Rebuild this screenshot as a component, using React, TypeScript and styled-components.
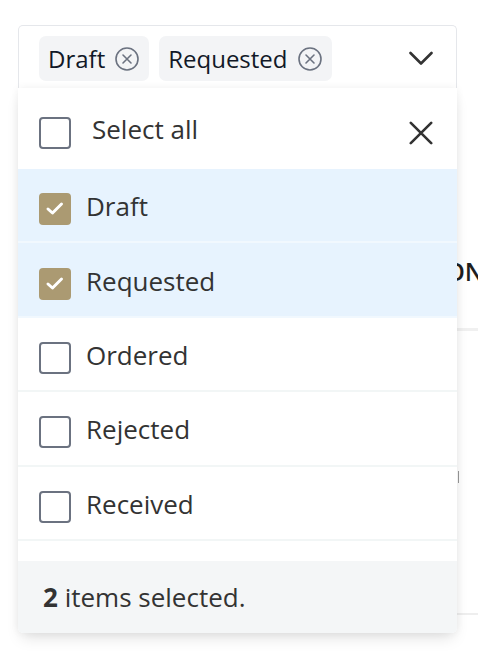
import React from "react";
import styled, { createGlobalStyle } from "styled-components";

const GlobalStyle = createGlobalStyle`
  html, body { margin: 0; padding: 0; background: #ffffff; }
  body { font-family: "Open Sans", "Noto Sans", sans-serif; }
  * { box-sizing: border-box; }
`;

const Page = styled.div`
  position: relative;
  width: 478px;
  height: 662px;
  overflow: hidden;
  background: #ffffff;
`;

/* ---------- background page (partly hidden under the dropdown) ---------- */
const BgTable = styled.div`
  width: 600px;
  margin-left: 40px;
  padding-top: 241px;
`;

const BgHead = styled.div`
  display: grid;
  grid-template-columns: 351px auto;
  height: 90px;
  padding-top: 14px;
  border-bottom: 3px solid #f0f0f0;
`;

const BgHeadCell = styled.div`
  font-size: 25px;
  line-height: 32px;
  font-weight: 600;
  color: #1f1f1f;
`;

const BgBody = styled.div`
  height: 284px;
  padding: 140px 0 0 418px;
  border-bottom: 2px solid #eeeeee;
`;

const BgCaret = styled.div`
  width: 1px;
  height: 12px;
  background: #9a9a9a;
`;

/* ---------- dropdown ---------- */
const Dropdown = styled.div`
  position: absolute;
  left: 18px;
  top: 25px;
  width: 439px;
`;

const Control = styled.div`
  height: 63px;
  display: flex;
  align-items: flex-start;
  padding: 10px 23px 0 20px;
  border: 1px solid #e5e7eb;
  border-bottom: none;
  border-radius: 5px 5px 0 0;
  background: #ffffff;
`;

const Chips = styled.div`
  flex: 1;
  display: flex;
  gap: 10px;
`;

const Chip = styled.div`
  height: 45px;
  display: flex;
  align-items: center;
  gap: 10px;
  padding: 0 10px 0 9px;
  border-radius: 7px;
  background: #f3f4f6;
  color: #111827;
  font-size: 24px;
`;

const IconSlot = styled.div`
  height: 45px;
  display: flex;
  align-items: center;
`;

const Panel = styled.div`
  position: absolute;
  top: 63px;
  left: 0;
  width: 100%;
  padding-top: 8px;
  background: #ffffff;
  border-radius: 0 0 5px 5px;
  overflow: hidden;
  box-shadow: 0 8px 16px -4px rgba(0, 0, 0, 0.13), 0 0 8px rgba(0, 0, 0, 0.06);
`;

const SelectAllRow = styled.div`
  height: 73px;
  display: flex;
  align-items: center;
  padding: 0 24px 0 21px;
`;

const OptionRow = styled.div<{ $selected?: boolean }>`
  height: 74.4px;
  display: flex;
  align-items: center;
  padding: 0 24px 0 21px;
  background: ${(p) => (p.$selected ? "#e7f3fe" : "#ffffff")};
  border-bottom: 2px solid ${(p) => (p.$selected ? "#f1f8fe" : "#f2f6f6")};
`;

const Box = styled.div<{ $checked?: boolean; $shift?: number }>`
  width: 32px;
  height: 32px;
  flex: none;
  margin-top: ${(p) => p.$shift ?? 0}px;
  border-radius: 4px;
  border: ${(p) => (p.$checked ? "none" : "2px solid #6b7280")};
  background: ${(p) => (p.$checked ? "#ab9a72" : "#ffffff")};
  display: flex;
  align-items: center;
  justify-content: center;
`;

const Label = styled.span<{ $gap: number; $up?: number; $down?: number }>`
  margin-left: ${(p) => p.$gap}px;
  padding-bottom: ${(p) => p.$up ?? 0}px;
  padding-top: ${(p) => p.$down ?? 0}px;
  flex: 1;
  font-size: 26px;
  color: #333333;
`;

const Footer = styled.div`
  margin-top: 20px;
  height: 72px;
  display: flex;
  align-items: center;
  padding-left: 25px;
  background: #f4f6f7;
  font-size: 26px;
  color: #333333;

  b {
    font-weight: 700;
  }
`;

/* ---------- icons ---------- */
const CircleX = () => (
  <svg width="24" height="24" viewBox="0 0 24 24" fill="none">
    <circle cx="12" cy="12" r="11" stroke="#6b7280" strokeWidth="1.6" />
    <path d="M8 8 L16 16 M16 8 L8 16" stroke="#6b7280" strokeWidth="1.6" strokeLinecap="round" />
  </svg>
);

const Chevron = () => (
  <svg width="24" height="15" viewBox="0 0 24 15" fill="none">
    <path d="M1.5 2 L12 12.5 L22.5 2" stroke="#333333" strokeWidth="2.6" strokeLinecap="round" strokeLinejoin="round" />
  </svg>
);

const CloseX = () => (
  <svg width="24" height="24" viewBox="0 0 24 24" fill="none">
    <path d="M1.8 1.8 L22.2 22.2 M22.2 1.8 L1.8 22.2" stroke="#333333" strokeWidth="2.6" strokeLinecap="round" />
  </svg>
);

const Check = () => (
  <svg width="32" height="32" viewBox="0 0 32 32" fill="none">
    <path d="M9 16 L13.5 20 L22.5 11" stroke="#ffffff" strokeWidth="3" strokeLinecap="round" strokeLinejoin="round" />
  </svg>
);

const options = [
  { label: "Draft", selected: true },
  { label: "Requested", selected: true },
  { label: "Ordered", selected: false },
  { label: "Rejected", selected: false },
  { label: "Received", selected: false },
];

export default function App() {
  const count = options.filter((o) => o.selected).length;
  return (
    <Page>
      <GlobalStyle />
      <BgTable>
        <BgHead>
          <div />
          <BgHeadCell>ACTION</BgHeadCell>
        </BgHead>
        <BgBody>
          <BgCaret />
        </BgBody>
      </BgTable>

      <Dropdown>
        <Control>
          <Chips>
            {options
              .filter((o) => o.selected)
              .map((o) => (
                <Chip key={o.label}>
                  {o.label}
                  <CircleX />
                </Chip>
              ))}
          </Chips>
          <IconSlot>
            <Chevron />
          </IconSlot>
        </Control>

        <Panel>
          <SelectAllRow>
            <Box />
            <Label $gap={21} $up={8}>
              Select all
            </Label>
            <CloseX />
          </SelectAllRow>
          {options.map((o) => (
            <OptionRow key={o.label} $selected={o.selected}>
              <Box $checked={o.selected} $shift={8}>
                {o.selected && <Check />}
              </Box>
              <Label $gap={15} $down={2}>
                {o.label}
              </Label>
            </OptionRow>
          ))}
          <Footer>
            <span>
              <b>{count}</b> items selected.
            </span>
          </Footer>
        </Panel>
      </Dropdown>
    </Page>
  );
}
